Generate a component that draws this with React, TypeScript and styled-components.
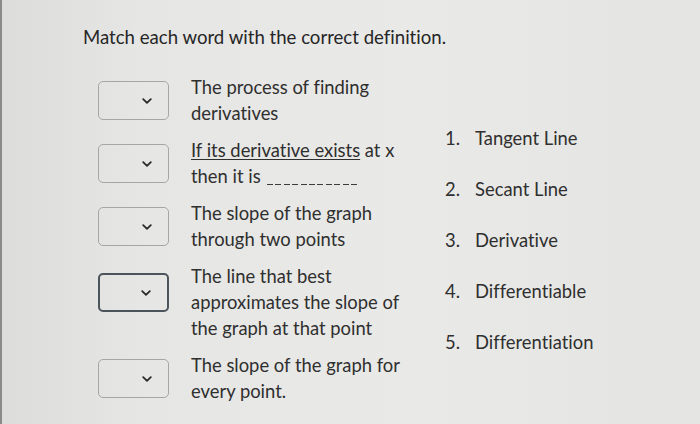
import styled, { createGlobalStyle } from "styled-components";

const GlobalStyle = createGlobalStyle`
  html, body {
    margin: 0;
    padding: 0;
  }
  body {
    width: 700px;
    height: 424px;
    overflow: hidden;
    background: linear-gradient(90deg, #dcdcda 0%, #e6e6e4 20%, #e9e9e7 60%, #e4e4e2 100%);
    font-family: Lato, "Open Sans", sans-serif;
    font-variant-ligatures: none;
    color: #2f2f2f;
  }
`;

const definitions = [
  { id: 1, lines: ["The process of finding", "derivatives"] },
  { id: 2, lines: [] as string[] },
  { id: 3, lines: ["The slope of the graph", "through two points"] },
  { id: 4, lines: ["The line that best", "approximates the slope of", "the graph at that point"] },
  { id: 5, lines: ["The slope of the graph for", "every point."] },
];

const words = ["Tangent Line", "Secant Line", "Derivative", "Differentiable", "Differentiation"];

export default function App() {
  return (
    <Page>
      <GlobalStyle />
      <EdgeLine />
      <Title>Match each word with the correct definition.</Title>
      <Body>
        <Definitions>
          {definitions.map((def) => (
            <Row key={def.id}>
              <SelectBox $focused={def.id === 4}>
                <Chevron viewBox="0 0 10 6">
                  <path d="M1.2 1.2 L5 4.8 L8.8 1.2" />
                </Chevron>
              </SelectBox>
              <DefText>
                {def.id === 2 ? (
                  <>
                    <Underlined>If its derivative exists</Underlined> at x
                    <br />
                    then it is <Blank />
                  </>
                ) : (
                  def.lines.map((line, i) => (
                    <span key={i}>
                      {line}
                      {i < def.lines.length - 1 && <br />}
                    </span>
                  ))
                )}
              </DefText>
            </Row>
          ))}
        </Definitions>
        <Words>
          {words.map((w, i) => (
            <WordItem key={w}>
              <Num>{i + 1}.</Num>
              <span>{w}</span>
            </WordItem>
          ))}
        </Words>
      </Body>
    </Page>
  );
}

const Page = styled.div`
  position: relative;
  width: 700px;
  height: 424px;
  box-sizing: border-box;
  padding: 25px 0 0 83px;
`;

const EdgeLine = styled.div`
  position: absolute;
  left: 0;
  top: 0;
  bottom: 0;
  width: 2px;
  background: #8a8a88;
`;

const Title = styled.h1`
  margin: 0;
  font-size: 18.6px;
  font-weight: 400;
  line-height: 24px;
  color: #262626;
`;

const Body = styled.div`
  display: flex;
  margin-top: 25px;
  padding-left: 15px;
`;

const Definitions = styled.div`
  display: flex;
  flex-direction: column;
  gap: 11px;
  width: 347px;
`;

const Row = styled.div`
  display: flex;
  align-items: flex-start;
  gap: 22px;
`;

const SelectBox = styled.div<{ $focused?: boolean }>`
  flex: none;
  width: 71px;
  height: 39px;
  margin-top: ${(p) => (p.$focused ? "10px" : "7px")};
  box-sizing: border-box;
  border: ${(p) => (p.$focused ? "2px solid #4b535b" : "1px solid #a6a6a6")};
  border-radius: 5px;
  display: flex;
  align-items: center;
  justify-content: flex-end;
  padding-right: 16px;
`;

const Chevron = styled.svg`
  width: 10px;
  height: 6px;
  fill: none;
  stroke: #2a2a2a;
  stroke-width: 1.8;
  stroke-linecap: round;
  stroke-linejoin: round;
`;

const DefText = styled.div`
  font-size: 18.4px;
  line-height: 26px;
  color: #2f2f2f;
`;

const Underlined = styled.span`
  text-decoration: underline;
  text-underline-offset: 2px;
`;

const Blank = styled.span`
  display: inline-block;
  width: 92px;
  height: 1.5px;
  margin-left: 2px;
  vertical-align: -2px;
  background: repeating-linear-gradient(90deg, #3c3c3c 0 6px, transparent 6px 8.4px);
`;

const Words = styled.ol`
  list-style: none;
  margin: 0;
  padding: 51px 0 0 0;
  display: flex;
  flex-direction: column;
  gap: 25px;
`;

const WordItem = styled.li`
  display: flex;
  font-size: 18.4px;
  line-height: 26px;
  color: #2f2f2f;
`;

const Num = styled.span`
  width: 30px;
`;
